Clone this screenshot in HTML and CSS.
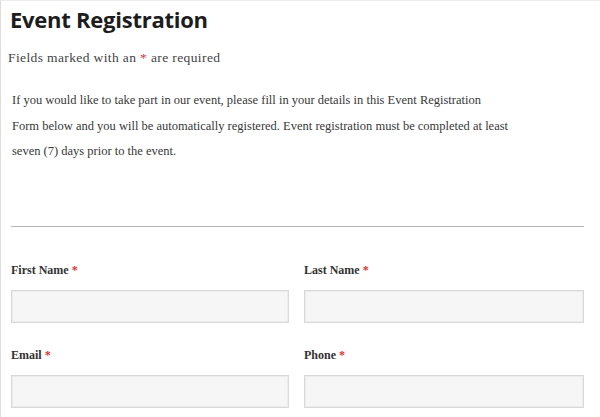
FILE: index.html
```html
<!DOCTYPE html>
<html>
<head>
<meta charset="utf-8">
<link rel="stylesheet" href="styles.css">
</head>
<body>
<div class="page">
  <h1 class="title">Event Registration</h1>
  <p class="note">Fields marked with an <span class="req">*</span> are required</p>
  <p class="intro">If you would like to take part in our event, please fill in your details in this Event Registration Form below and you will be automatically registered. Event registration must be completed at least seven (7) days prior to the event.</p>
  <hr class="rule">
  <div class="grid">
    <div class="field">
      <label class="label">First Name <span class="req">*</span></label>
      <div class="input"></div>
    </div>
    <div class="field">
      <label class="label">Last Name <span class="req">*</span></label>
      <div class="input"></div>
    </div>
    <div class="field">
      <label class="label">Email <span class="req">*</span></label>
      <div class="input"></div>
    </div>
    <div class="field">
      <label class="label">Phone <span class="req">*</span></label>
      <div class="input"></div>
    </div>
  </div>
</div>
</body>
</html>
```
FILE: styles.css
```css
html, body {
  margin: 0;
  padding: 0;
  background: #fff;
}
.page {
  width: 600px;
  height: 417px;
  box-sizing: border-box;
  border-left: 1px solid #dcdcdc;
  border-top: 1px solid #ececec;
  overflow: hidden;
  font-family: "Liberation Serif", "Times New Roman", serif;
  color: #333;
}
.title {
  margin: 0;
  padding: 3px 0 0 9px;
  font-family: "Open Sans", "Noto Sans", sans-serif;
  font-weight: 700;
  font-size: 22px;
  line-height: 30px;
  color: #1d1d1d;
  letter-spacing: -0.25px;
}
.note {
  margin: 16px 0 0 7px;
  font-size: 13.5px;
  letter-spacing: 0.38px;
  line-height: 16px;
  color: #444;
}
.req {
  color: #d63637;
}
.intro {
  margin: 22px 0 0 11px;
  width: 497px;
  font-size: 12.5px;
  line-height: 25.5px;
  color: #383838;
}
.rule {
  margin: 61px 16px 0 10px;
  border: 0;
  border-top: 1px solid #b5b5b5;
  height: 0;
}
.grid {
  display: grid;
  grid-template-columns: 278px 280px;
  column-gap: 15px;
  row-gap: 25px;
  margin: 36px 0 0 10px;
}
.label {
  display: block;
  font-weight: 700;
  font-size: 12px;
  line-height: 14px;
  color: #333;
  margin-bottom: 13px;
}
.input {
  height: 33px;
  box-sizing: border-box;
  background: #f6f6f6;
  border: 1px solid #d9d9d9;
  box-shadow: inset 0 0 0 1px #ececec;
}
```
